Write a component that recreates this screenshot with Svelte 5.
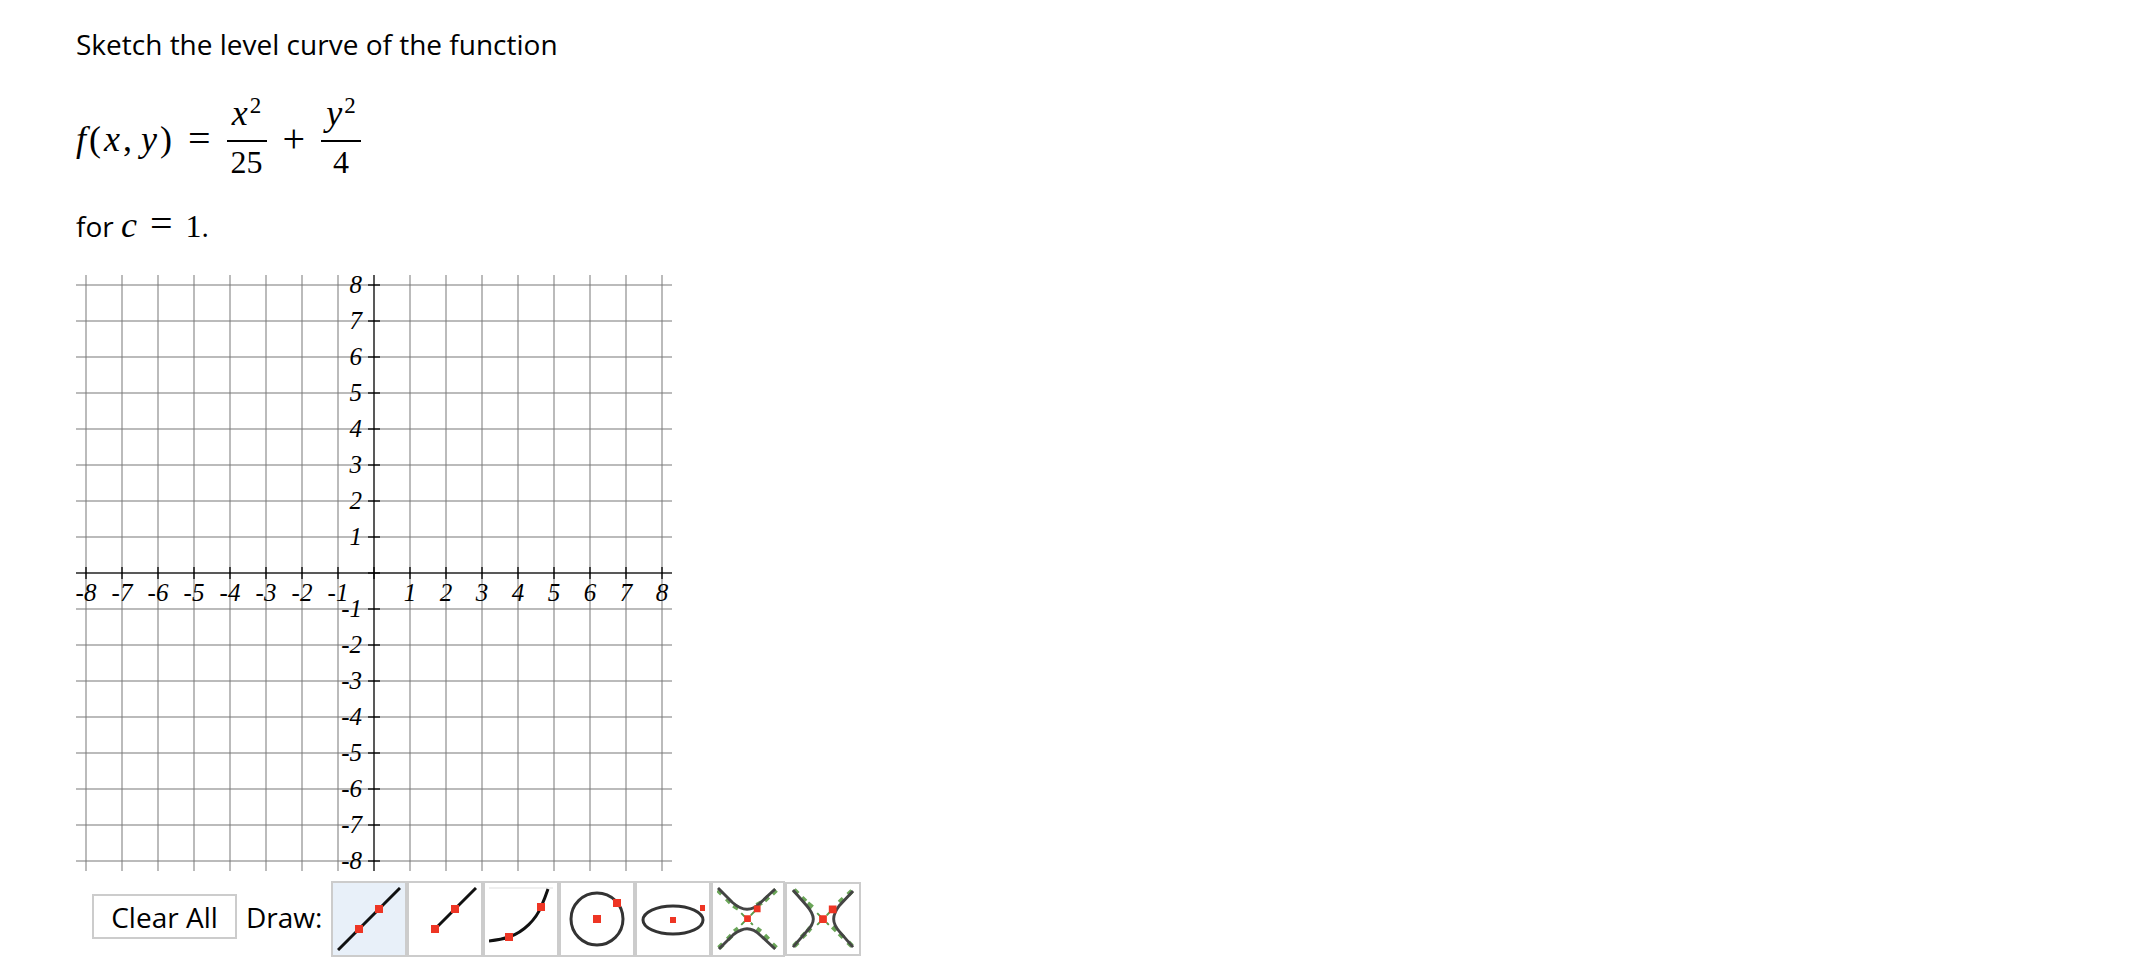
<script lang="ts">
  const unit = 36;
  const origin = 298;
  const size = 596;

  const steps = Array.from({ length: 17 }, (_, i) => i - 8);
  const labels = steps.filter((n) => n !== 0);

  const tools = ['Line', 'Ray', 'Parabola', 'Circle', 'Ellipse', 'Vertical hyperbola', 'Horizontal hyperbola'];

  let selected = $state(0);
</script>

<main>
  <p>Sketch the level curve of the function</p>

  <div class="equation math">
    <span class="call"><i>f</i><span>(</span><i>x</i><span class="comma">,</span><i>y</i><span>)</span></span>
    <span class="op">=</span>
    <span class="fraction">
      <span class="top"><i>x</i><sup>2</sup></span>
      <span class="bottom">25</span>
    </span>
    <span class="op">+</span>
    <span class="fraction">
      <span class="top"><i>y</i><sup>2</sup></span>
      <span class="bottom">4</span>
    </span>
  </div>

  <p class="condition">for <span class="math"><i>c</i><span class="op">=</span>1</span>.</p>

  <svg class="graph" viewBox="0 0 {size} {size}" role="img" aria-label="Coordinate grid">
    {#each labels as n}
      <line class="grid" x1={origin + n * unit} y1="0" x2={origin + n * unit} y2={size} />
      <line class="grid" x1="0" y1={origin + n * unit} x2={size} y2={origin + n * unit} />
    {/each}

    <line class="axis" x1={origin} y1="0" x2={origin} y2={size} />
    <line class="axis" x1="0" y1={origin} x2={size} y2={origin} />

    {#each steps as n}
      <line class="axis" x1={origin + n * unit} y1={origin - 6} x2={origin + n * unit} y2={origin + 6} />
      <line class="axis" x1={origin - 6} y1={origin + n * unit} x2={origin + 6} y2={origin + n * unit} />
    {/each}

    {#each labels as n}
      <text x={origin + n * unit} y={origin + 28} text-anchor="middle">{n}</text>
      <text x={origin - 12} y={origin - n * unit + 8} text-anchor="end">{n}</text>
    {/each}
  </svg>

  <div class="controls">
    <button class="clear" type="button" onclick={() => (selected = 0)}>Clear All</button>
    <span id="draw-label">Draw:</span>
    <div class="tools" role="group" aria-labelledby="draw-label">
      {#each tools as tool, i}
        <button
          class="tool"
          class:narrow={i === 5}
          class:short={i === 6}
          class:selected={selected === i}
          type="button"
          aria-label={tool}
          aria-pressed={selected === i}
          onclick={() => (selected = i)}
        >
          <svg viewBox="0 0 64 64">
            {#if i === 0}
              <path class="ink" d="M1 63 63 1" />
              <path class="point" d="M18 38h8v8h-8zM38 18h8v8h-8z" />
            {:else if i === 1}
              <path class="ink" d="M22 42 63 1" />
              <path class="point" d="M18 38h8v8h-8zM38 18h8v8h-8z" />
            {:else if i === 2}
              <path class="edge" d="M0 1H64" />
              <path class="ink" d="M0 54C8 53 14 52 20 50C35 45 47 32 52 20Q56 11 59 2" />
              <path class="point" d="M16 46h8v8h-8zM48 16h8v8h-8z" />
            {:else if i === 3}
              <circle class="ink soft" cx="32" cy="32" r="26" />
              <path class="point" d="M28 28h8v8h-8zM48 12h8v8h-8z" />
            {:else if i === 4}
              <ellipse class="ink soft" cx="32" cy="33" rx="30" ry="14" />
              <path class="point" d="M29 30h6v6h-6zM59 18h5v6h-5z" />
            {:else if i === 5}
              <path class="leaf" d="M1 2 5 6M10 11 14 15M17 18 22 21M61 2 57 6M53 9 49 13M46 15 41 18M2 62 6 58M11 53 15 49M18 45 22 42M61 62 57 58M53 53 49 49M45 45 41 42" />
              <path class="dash" d="M25 26 37 38M25 38 37 26M36 27 42 21" />
              <path class="ink thin" d="M1 0 16 15Q24 22 31 22Q38 22 44 16L60 1M2 63 17 48Q25 42 31 42Q38 42 45 49L60 63" />
              <path class="point" d="M28 28h7v7h-7zM38 18h7v7h-7z" />
            {:else}
              <path class="leaf" d="M2 2 6 6M10 10 14 14M16 16 21 20M62 3 58 7M53 11 49 15M2 60 6 56M10 51 14 47M16 45 19 41M62 60 58 56M53 51 49 47M46 44 42 40" />
              <path class="dash" d="M26 26 38 38M26 38 38 26M37 27 42 22" />
              <path class="ink thin" d="M1 2 15 18Q22 26 22 32Q22 38 15 45L1 61M63 3 49 18Q43 26 43 32Q43 38 49 45L63 61" />
              <path class="point" d="M28 28h8v8h-8zM38 18h8v8h-8z" />
            {/if}
          </svg>
        </button>
      {/each}
    </div>
  </div>
</main>

<style>
  :global(body) {
    background: #fff;
  }

  main {
    padding: 24px 76px;
    color: #000;
    font-family: 'Trebuchet MS', 'Open Sans', sans-serif;
    font-size: 28px;
    line-height: 40px;
  }

  p {
    margin: 0;
  }

  .math {
    font-family: 'Liberation Serif', serif;
    font-size: 32px;
  }

  .math i {
    font-size: 36px;
    line-height: 32px;
  }

  .op {
    margin: 0 16px;
    font-size: 40px;
  }

  .equation {
    display: flex;
    align-items: center;
    margin: 24px 0;
  }

  .equation .op {
    padding-top: 8px;
  }

  .call {
    display: flex;
    align-items: baseline;
    gap: 3px;
    padding-top: 8px;
  }

  .call > span {
    font-size: 36px;
  }

  .comma {
    margin-right: 6px;
  }

  .fraction {
    display: flex;
    flex-direction: column;
    align-items: center;
    min-width: 40px;
  }

  .top {
    line-height: 52px;
  }

  .bottom {
    align-self: stretch;
    border-top: 2px solid #000;
    text-align: center;
  }

  sup {
    margin-left: 2px;
    font-size: 23px;
    line-height: 0;
  }

  .condition {
    height: 40px;
  }

  .condition .op {
    margin: 0 13px;
    line-height: 32px;
  }

  .graph {
    display: block;
    width: 596px;
    max-width: 100%;
    margin-top: 29px;
    overflow: visible;
  }

  .grid {
    stroke: #777;
    stroke-width: 2;
    stroke-opacity: 0.5;
  }

  .axis {
    stroke: #000;
    stroke-width: 2;
    stroke-opacity: 0.65;
  }

  .graph text {
    font-family: 'Liberation Serif', serif;
    font-size: 25px;
    font-style: italic;
  }

  .controls {
    display: flex;
    align-items: center;
    gap: 9px;
    margin: 10px 0 0 16px;
  }

  button {
    padding: 0;
    border: 2px solid #ccc;
    background: #fff;
    color: #000;
    font: inherit;
    cursor: pointer;
  }

  .clear {
    box-sizing: border-box;
    width: 145px;
    height: 45px;
    line-height: 36px;
  }

  .clear,
  #draw-label {
    margin-bottom: 5px;
  }

  .tools {
    display: flex;
    align-items: center;
  }

  .tool {
    box-sizing: border-box;
    width: 76px;
    height: 76px;
    padding: 4px;
  }

  .narrow {
    width: 74px;
  }

  .short {
    height: 74px;
  }

  .selected {
    background: #e8f0f9;
  }

  .tool svg {
    display: block;
    width: 100%;
    height: 100%;
  }

  .ink {
    fill: none;
    stroke: #111;
    stroke-width: 3;
  }

  .soft {
    stroke: #333;
  }

  .thin {
    stroke: #444;
  }

  .edge {
    stroke: #eee;
    stroke-width: 2;
  }

  .leaf {
    fill: none;
    stroke: #6aa558;
    stroke-width: 5;
  }

  .dash {
    stroke: #5a9a48;
    stroke-width: 2;
    stroke-dasharray: 5 2;
  }

  .point {
    fill: #ee3524;
  }
</style>
